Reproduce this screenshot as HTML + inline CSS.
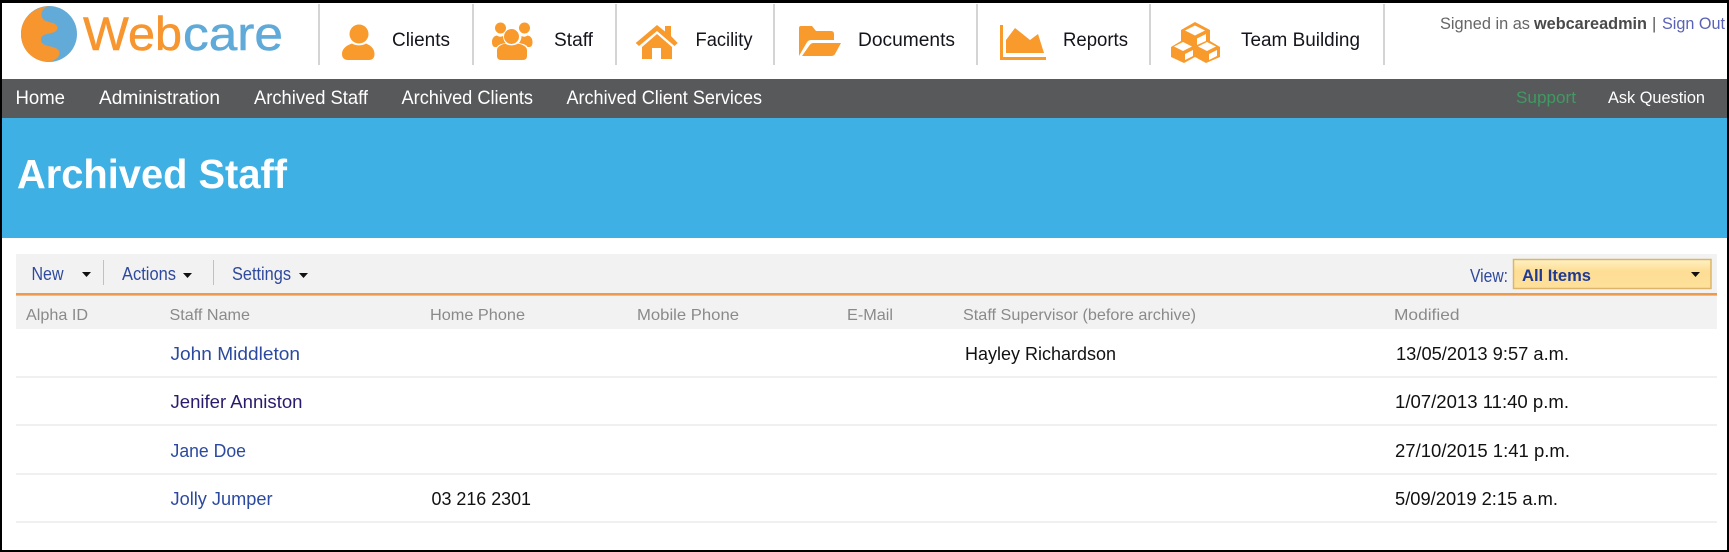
<!DOCTYPE html>
<html><head><meta charset="utf-8"><title>Archived Staff</title>
<style>
html,body{margin:0;padding:0;background:#fff}
svg{display:block}
text{font-family:"Liberation Sans",sans-serif}
.n{font-size:19px;fill:#fff}
.m{font-size:19px;fill:#14141c}
.t{font-size:18px;fill:#2f4a9c}
.h{font-size:16px;fill:#8a8a8a}
.l{font-size:18px;fill:#2b4a9f}
.d{font-size:18px;fill:#111}
</style></head><body>
<svg width="1729" height="552" viewBox="0 0 1729 552" xmlns="http://www.w3.org/2000/svg">
<rect width="1729" height="552" fill="#fff"/>
<!-- logo -->
<circle cx="49" cy="34" r="28" fill="#62abd8"/>
<path d="M52 6C45 6 41.500 10 41.500 14.500C41.500 20 46 21.500 51 22.500C55.500 23.500 57.500 25.500 57.500 28C57.500 31 54.500 32.500 49 33.500C44 34.500 41 36 41 39.500C41 44 45 45.500 50.500 46.500C56 47.500 59.500 49.500 59.500 53C59.500 57.500 54.500 61 48 62C32 61 21 49 21 34C21 18 34 6 52 6Z" fill="#f7952f"/>
<text x="83" y="50" font-size="47.500" fill="#f7952f" stroke="#f7952f" stroke-width=".5" textLength="99" lengthAdjust="spacingAndGlyphs">Web</text>
<text x="183" y="50" font-size="47.500" fill="#5faad8" stroke="#5faad8" stroke-width=".5" textLength="100" lengthAdjust="spacingAndGlyphs">care</text>
<!-- menu separators -->
<g fill="#d4d4d4"><rect x="318" y="4" width="2" height="61"/><rect x="472" y="4" width="2" height="61"/><rect x="615" y="4" width="2" height="61"/><rect x="773" y="4" width="2" height="61"/><rect x="976" y="4" width="2" height="61"/><rect x="1149" y="4" width="2" height="61"/><rect x="1383" y="4" width="2" height="61"/></g>
<!-- icons -->
<g fill="#f99a2d">
<!-- clients -->
<ellipse cx="359" cy="34" rx="9.500" ry="9.500"/>
<path d="M342 54C342 49 346 45.500 352 43.500C356 46 362 46 366 43.500C371 45.500 374.500 49 374.500 54C374.500 58 372.500 60 369 60H348C344.500 60 342 58 342 54Z"/>
<!-- staff -->
<circle cx="500.500" cy="28" r="5.500"/><circle cx="524.500" cy="28" r="5.500"/>
<path d="M492 42C492 38 494 36 497 35.500C499 37 501 37 503 36C503 39 504 41 505.500 43C500 44 497.500 45.500 497 47H495C493 47 492 45 492 42Z"/>
<path d="M532.500 42C532.500 38 530.500 36 527.500 35.500C525.500 37 523.500 37 521.500 36C521.500 39 520.500 41 519 43C524.500 44 527 45.500 527.500 47H529.500C531.500 47 532.500 45 532.500 42Z"/>
<circle cx="511.500" cy="36.500" r="7.500"/>
<path d="M497 56V50C497 47 501 44.500 505 43.500C509 46 514 46 518 43.500C523 44.500 527 47 527 50V56C527 58.500 525.500 60 523 60H501C498.500 60 497 58.500 497 56Z"/>
<!-- facility -->
<path d="M665 26H671V36L677.700 43L674.500 46L657 31L639 46L635.700 43L657 25L665 31.500Z"/>
<path d="M657 34L672 47V59H661V48H652V59H642V47Z"/>
<!-- documents -->
<path d="M799 28Q799 26 801 26H812L816 31H831Q834 31 834 34V40H811Q808 40 806.500 43L799 56Z"/>
<path d="M813 43H841L835 54Q834 56 831 56H802L809 46Q811 43 813 43Z"/>
<!-- reports -->
<path d="M1000 25H1003V57H1046V60H1000Z"/>
<path d="M1006 53V40L1015 28L1030 40L1038 34L1044 53Z"/>
<!-- team building -->
<path d="M1195 22L1210 30V41L1220 47V57L1206 63L1195 57L1184 63L1171 57V47L1181 41V30Z"/>
</g>
<g fill="#fff">
<path d="M1195 25.500L1205 30.500L1195 35.500L1185 30.500Z"/>
<path d="M1197 38.500L1206 34V41L1197 45Z"/>
<path d="M1183 42L1192 46.500L1183 51L1174 46.500Z"/>
<path d="M1185 54L1193 50V56L1185 60Z"/>
<path d="M1207 42L1216 46.500L1207 51L1198 46.500Z"/>
<path d="M1209 54L1217 50V56L1209 60Z"/>
</g>
<!-- menu labels -->
<text class="m" x="392" y="46" textLength="58" lengthAdjust="spacingAndGlyphs">Clients</text>
<text class="m" x="554" y="46" textLength="39" lengthAdjust="spacingAndGlyphs">Staff</text>
<text class="m" x="695.500" y="46" textLength="57" lengthAdjust="spacingAndGlyphs">Facility</text>
<text class="m" x="858" y="46" textLength="97" lengthAdjust="spacingAndGlyphs">Documents</text>
<text class="m" x="1063" y="46" textLength="65" lengthAdjust="spacingAndGlyphs">Reports</text>
<text class="m" x="1241" y="46" textLength="119" lengthAdjust="spacingAndGlyphs">Team Building</text>
<!-- signed in -->
<text x="1440" y="29" font-size="16.500" fill="#666" textLength="90" lengthAdjust="spacingAndGlyphs">Signed in as</text>
<text x="1534" y="29" font-size="16.500" font-weight="bold" fill="#4a4a4a" textLength="113" lengthAdjust="spacingAndGlyphs">webcareadmin</text>
<text x="1652" y="29" font-size="16.500" fill="#555">|</text>
<text x="1662" y="29" font-size="16.500" fill="#5a62b8" textLength="63" lengthAdjust="spacingAndGlyphs">Sign Out</text>
<!-- nav -->
<rect x="0" y="79" width="1729" height="39" fill="#58595b"/>
<text class="n" x="15.500" y="104" textLength="49.500" lengthAdjust="spacingAndGlyphs">Home</text>
<text class="n" x="99" y="104" textLength="121" lengthAdjust="spacingAndGlyphs">Administration</text>
<text class="n" x="254" y="104" textLength="114" lengthAdjust="spacingAndGlyphs">Archived Staff</text>
<text class="n" x="401.500" y="104" textLength="131.500" lengthAdjust="spacingAndGlyphs">Archived Clients</text>
<text class="n" x="566.500" y="104" textLength="195.500" lengthAdjust="spacingAndGlyphs">Archived Client Services</text>
<text x="1516" y="103" font-size="17" fill="#3f9a63" textLength="60" lengthAdjust="spacingAndGlyphs">Support</text>
<text x="1608" y="103" font-size="17" fill="#fff" textLength="97" lengthAdjust="spacingAndGlyphs">Ask Question</text>
<!-- banner -->
<rect x="0" y="118" width="1729" height="120" fill="#3eb0e4"/>
<text x="17" y="188" font-size="41" font-weight="bold" fill="#fff" textLength="270" lengthAdjust="spacingAndGlyphs">Archived Staff</text>
<!-- toolbar -->
<rect x="16" y="254" width="1701" height="39" fill="#f2f2f2"/>
<rect x="16" y="293" width="1701" height="2" fill="#ee9a4d"/>
<rect x="16" y="295" width="1701" height="1" fill="#b8c8dc"/>
<rect x="16" y="296" width="1701" height="33" fill="#f2f2f2"/>
<rect x="103" y="260" width="1" height="25" fill="#a9c6e2"/>
<rect x="213" y="260" width="1" height="25" fill="#a9c6e2"/>
<text class="t" x="31.500" y="280" textLength="32" lengthAdjust="spacingAndGlyphs">New</text>
<text class="t" x="122" y="280" textLength="54" lengthAdjust="spacingAndGlyphs">Actions</text>
<text class="t" x="232" y="280" textLength="59" lengthAdjust="spacingAndGlyphs">Settings</text>
<text class="t" x="1470" y="282" textLength="38" lengthAdjust="spacingAndGlyphs">View:</text>
<defs><linearGradient id="g" x1="0" y1="0" x2="0" y2="1"><stop offset="0" stop-color="#fff1c4"/><stop offset=".4" stop-color="#fede95"/><stop offset="1" stop-color="#fee09a"/></linearGradient></defs>
<rect x="1513.500" y="259.500" width="197.500" height="29" fill="url(#g)" stroke="#dcb56a" stroke-width="1.500"/>
<g fill="#111"><path d="M82 272H91L86.500 277Z"/><path d="M183 273H192L187.500 278Z"/><path d="M299 273H308L303.500 278Z"/><path d="M1691 272H1700L1695.500 277Z"/></g>
<text x="1522" y="281" font-size="17" font-weight="bold" fill="#1f3a93" textLength="69" lengthAdjust="spacingAndGlyphs">All Items</text>
<!-- table header -->
<text class="h" x="26" y="320" textLength="62" lengthAdjust="spacingAndGlyphs">Alpha ID</text>
<text class="h" x="169.500" y="320" textLength="80.500" lengthAdjust="spacingAndGlyphs">Staff Name</text>
<text class="h" x="430" y="320" textLength="95" lengthAdjust="spacingAndGlyphs">Home Phone</text>
<text class="h" x="637" y="320" textLength="102" lengthAdjust="spacingAndGlyphs">Mobile Phone</text>
<text class="h" x="847" y="320" textLength="46" lengthAdjust="spacingAndGlyphs">E-Mail</text>
<text class="h" x="963" y="320" textLength="233" lengthAdjust="spacingAndGlyphs">Staff Supervisor (before archive)</text>
<text class="h" x="1394" y="320" textLength="65.500" lengthAdjust="spacingAndGlyphs">Modified</text>
<!-- rows -->
<g fill="#f0f0f0"><rect x="16" y="376" width="1701" height="2"/><rect x="16" y="424" width="1701" height="2"/><rect x="16" y="473" width="1701" height="2"/><rect x="16" y="521" width="1701" height="2"/></g>
<text class="l" x="170.500" y="360" textLength="129.500" lengthAdjust="spacingAndGlyphs">John Middleton</text>
<text class="d" x="965" y="360" textLength="151" lengthAdjust="spacingAndGlyphs">Hayley Richardson</text>
<text class="d" x="1396" y="360" textLength="173" lengthAdjust="spacingAndGlyphs">13/05/2013 9:57 a.m.</text>
<text class="l" style="fill:#2a1a6b" x="170.500" y="408" textLength="132" lengthAdjust="spacingAndGlyphs">Jenifer Anniston</text>
<text class="d" x="1395" y="408" textLength="174" lengthAdjust="spacingAndGlyphs">1/07/2013 11:40 p.m.</text>
<text class="l" x="170.500" y="457" textLength="75.500" lengthAdjust="spacingAndGlyphs">Jane Doe</text>
<text class="d" x="1395" y="457" textLength="175" lengthAdjust="spacingAndGlyphs">27/10/2015 1:41 p.m.</text>
<text class="l" x="170.500" y="505" textLength="102" lengthAdjust="spacingAndGlyphs">Jolly Jumper</text>
<text class="d" x="431.500" y="505" textLength="99.500" lengthAdjust="spacingAndGlyphs">03 216 2301</text>
<text class="d" x="1395" y="505" textLength="163" lengthAdjust="spacingAndGlyphs">5/09/2019 2:15 a.m.</text>
<!-- outer border -->
<rect x="0" y="0" width="1729" height="3" fill="#000"/>
<rect x="0" y="550" width="1729" height="2" fill="#000"/>
<rect x="0" y="0" width="2" height="552" fill="#000"/>
<rect x="1727" y="0" width="2" height="552" fill="#000"/>
</svg>
</body></html>
